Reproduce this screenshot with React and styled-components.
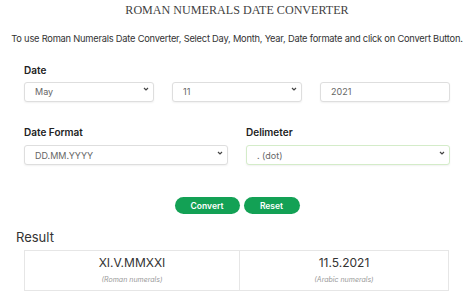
import styled, { createGlobalStyle } from 'styled-components';

const GlobalStyle = createGlobalStyle`
  * { box-sizing: border-box; }
  body {
    margin: 0;
    background: #fff;
    font-family: Inter, "Noto Sans", sans-serif;
    color: #333;
  }
`;

const Page = styled.div`
  width: 474px;
  height: 306px;
  overflow: hidden;
`;

const Title = styled.h1`
  margin: 0;
  padding-top: 2px;
  text-align: center;
  font-family: "Liberation Serif", "DejaVu Serif", serif;
  font-weight: normal;
  font-size: 12.1px;
  line-height: 16px;
  color: #3f3f3f;
`;

const Intro = styled.p`
  margin: 14px 0 0;
  text-align: center;
  white-space: nowrap;
  font-size: 9.3px;
  letter-spacing: -0.22px;
  line-height: 14px;
  color: #333;
`;

const Form = styled.div`
  padding: 0 24px;
`;

const Section = styled.div`
  margin-top: ${(p) => p.$top}px;
`;

const Label = styled.div`
  font-size: 10px;
  font-weight: 600;
  line-height: 12px;
  color: #222;
  margin-bottom: ${(p) => p.$gap}px;
`;

const Grid = styled.div`
  display: grid;
  grid-template-columns: repeat(${(p) => p.$cols}, 1fr);
  column-gap: 18px;
`;

const Field = styled.div``;

const SelectWrap = styled.div`
  position: relative;
`;

const Select = styled.select`
  appearance: none;
  width: 100%;
  height: 20px;
  padding: 0 10px;
  font-family: Inter, "Noto Sans", sans-serif;
  font-size: 9px;
  color: #666;
  background: #fff;
  border: 1px solid ${(p) => (p.$focus ? '#d4ecc9' : '#dedede')};
  border-radius: 3px;
  box-shadow: 0 1px 2px rgba(0, 0, 0, 0.06);
  outline: none;
`;

const Input = styled.input`
  width: 100%;
  height: 20px;
  padding: 0 10px;
  font-family: Inter, "Noto Sans", sans-serif;
  font-size: 9px;
  color: #666;
  border: 1px solid #dedede;
  border-radius: 3px;
  box-shadow: 0 1px 2px rgba(0, 0, 0, 0.06);
  outline: none;
`;

const Chevron = styled.svg`
  position: absolute;
  right: 5px;
  top: 8px;
  pointer-events: none;
`;

const Buttons = styled.div`
  display: flex;
  justify-content: center;
  gap: 4px;
  margin-top: 32px;
`;

const Button = styled.button`
  height: 17px;
  width: ${(p) => p.$w}px;
  border: none;
  border-radius: 9px;
  background: #13a155;
  color: #fff;
  font-family: Inter, "Noto Sans", sans-serif;
  font-size: 8.5px;
  font-weight: 600;
  cursor: pointer;
`;

const ResultTitle = styled.h2`
  margin: 15px 0 0 16px;
  font-size: 13px;
  font-weight: normal;
  line-height: 16px;
  color: #333;
`;

const ResultTable = styled.div`
  margin: 5px 25px 0 24px;
  display: grid;
  grid-template-columns: 214px 1fr;
  border: 1px solid #e6e6e6;
`;

const Cell = styled.div`
  height: 39px;
  padding-top: 4px;
  text-align: center;
  border-left: ${(p) => (p.$first ? 'none' : '1px solid #e6e6e6')};
`;

const Value = styled.div`
  font-size: 12px;
  line-height: 15px;
  color: #333;
`;

const Note = styled.div`
  margin-top: 5px;
  font-size: 7px;
  font-style: italic;
  color: #999;
`;

const Arrow = () => (
  <Chevron width="6" height="4" viewBox="0 0 6 4">
    <path d="M1 1l2 2 2-2" fill="none" stroke="#444" strokeWidth="1.2" />
  </Chevron>
);

const Dropdown = ({ value, focus, children }) => (
  <SelectWrap>
    <Select defaultValue={value} $focus={focus}>
      {children}
    </Select>
    <Arrow />
  </SelectWrap>
);

export default function App() {
  return (
    <Page>
      <GlobalStyle />
      <Title>ROMAN NUMERALS DATE CONVERTER</Title>
      <Intro>
        To use Roman Numerals Date Converter, Select Day, Month, Year, Date formate and click on Convert Button.
      </Intro>
      <Form>
        <Section $top={18}>
          <Label $gap={3}>Date</Label>
          <Grid $cols={3}>
            <Field>
              <Dropdown value="May">
                <option>May</option>
              </Dropdown>
            </Field>
            <Field>
              <Dropdown value="11">
                <option>11</option>
              </Dropdown>
            </Field>
            <Field>
              <Input defaultValue="2021" />
            </Field>
          </Grid>
        </Section>
        <Section $top={24}>
          <Grid $cols={2}>
            <Field>
              <Label $gap={5}>Date Format</Label>
              <Dropdown value="DD.MM.YYYY">
                <option>DD.MM.YYYY</option>
              </Dropdown>
            </Field>
            <Field>
              <Label $gap={5}>Delimeter</Label>
              <Dropdown value=". (dot)" focus>
                <option>. (dot)</option>
              </Dropdown>
            </Field>
          </Grid>
        </Section>
      </Form>
      <Buttons>
        <Button $w={65}>Convert</Button>
        <Button $w={56}>Reset</Button>
      </Buttons>
      <ResultTitle>Result</ResultTitle>
      <ResultTable>
        <Cell $first>
          <Value>XI.V.MMXXI</Value>
          <Note>(Roman numerals)</Note>
        </Cell>
        <Cell>
          <Value>11.5.2021</Value>
          <Note>(Arabic numerals)</Note>
        </Cell>
      </ResultTable>
    </Page>
  );
}
